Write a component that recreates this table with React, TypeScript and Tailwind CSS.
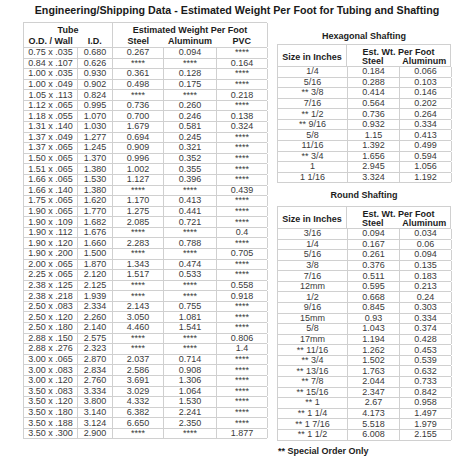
type Row = string[];

const tubes: Row[] = [
  ["0.75 x .035", "0.680", "0.267", "0.094", "****"],
  ["0.84 x .107", "0.626", "****", "****", "0.164"],
  ["1.00 x .035", "0.930", "0.361", "0.128", "****"],
  ["1.00 x .049", "0.902", "0.498", "0.175", "****"],
  ["1.05 x .113", "0.824", "****", "****", "0.218"],
  ["1.12 x .065", "0.995", "0.736", "0.260", "****"],
  ["1.18 x .055", "1.070", "0.700", "0.246", "0.138"],
  ["1.31 x .140", "1.030", "1.679", "0.581", "0.324"],
  ["1.37 x .049", "1.277", "0.694", "0.245", "****"],
  ["1.37 x .065", "1.245", "0.909", "0.321", "****"],
  ["1.50 x .065", "1.370", "0.996", "0.352", "****"],
  ["1.51 x .065", "1.380", "1.002", "0.355", "****"],
  ["1.66 x .065", "1.530", "1.127", "0.396", "****"],
  ["1.66 x .140", "1.380", "****", "****", "0.439"],
  ["1.75 x .065", "1.620", "1.170", "0.413", "****"],
  ["1.90 x .065", "1.770", "1.275", "0.441", "****"],
  ["1.90 x .109", "1.682", "2.085", "0.721", "****"],
  ["1.90 x .112", "1.676", "****", "****", "0.4"],
  ["1.90 x .120", "1.660", "2.283", "0.788", "****"],
  ["1.90 x .200", "1.500", "****", "****", "0.705"],
  ["2.00 x .065", "1.870", "1.343", "0.474", "****"],
  ["2.25 x .065", "2.120", "1.517", "0.533", "****"],
  ["2.38 x .125", "2.125", "****", "****", "0.558"],
  ["2.38 x .218", "1.939", "****", "****", "0.918"],
  ["2.50 x .083", "2.334", "2.143", "0.755", "****"],
  ["2.50 x .120", "2.260", "3.050", "1.081", "****"],
  ["2.50 x .180", "2.140", "4.460", "1.541", "****"],
  ["2.88 x .150", "2.575", "****", "****", "0.806"],
  ["2.88 x .276", "2.323", "****", "****", "1.4"],
  ["3.00 x .065", "2.870", "2.037", "0.714", "****"],
  ["3.00 x .083", "2.834", "2.586", "0.908", "****"],
  ["3.00 x .120", "2.760", "3.691", "1.306", "****"],
  ["3.50 x .083", "3.334", "3.029", "1.064", "****"],
  ["3.50 x .120", "3.800", "4.332", "1.530", "****"],
  ["3.50 x .180", "3.140", "6.382", "2.241", "****"],
  ["3.50 x .188", "3.124", "6.650", "2.350", "****"],
  ["3.50 x .300", "2.900", "****", "****", "1.877"],
];

const hex: Row[] = [
  ["1/4", "0.184", "0.066"],
  ["5/16", "0.288", "0.103"],
  ["** 3/8", "0.414", "0.146"],
  ["7/16", "0.564", "0.202"],
  ["** 1/2", "0.736", "0.264"],
  ["** 9/16", "0.932", "0.334"],
  ["5/8", "1.15", "0.413"],
  ["11/16", "1.392", "0.499"],
  ["** 3/4", "1.656", "0.594"],
  ["1", "2.945", "1.056"],
  ["1 1/16", "3.324", "1.192"],
];

const round: Row[] = [
  ["3/16", "0.094", "0.034"],
  ["1/4", "0.167", "0.06"],
  ["5/16", "0.261", "0.094"],
  ["3/8", "0.376", "0.135"],
  ["7/16", "0.511", "0.183"],
  ["12mm", "0.595", "0.213"],
  ["1/2", "0.668", "0.24"],
  ["9/16", "0.845", "0.303"],
  ["15mm", "0.93", "0.334"],
  ["5/8", "1.043", "0.374"],
  ["17mm", "1.194", "0.428"],
  ["** 11/16", "1.262", "0.453"],
  ["** 3/4", "1.502", "0.539"],
  ["** 13/16", "1.763", "0.632"],
  ["** 7/8", "2.044", "0.733"],
  ["** 15/16", "2.347", "0.842"],
  ["** 1", "2.67", "0.958"],
  ["** 1 1/4", "4.173", "1.497"],
  ["** 1 7/16", "5.518", "1.979"],
  ["** 1 1/2", "6.008", "2.155"],
];

const line = "border-[#d0d0d0]";
const cellCls = "flex items-center justify-center border-r border-[#d0d0d0] leading-[9px] whitespace-nowrap";
const bold = "font-bold text-[#1c1c1c] leading-[10px] whitespace-nowrap";

function DataRows({ rows, cols }: { rows: Row[]; cols: string }) {
  return (
    <>
      {rows.map((r, i) => (
        <div key={i} className={`grid ${cols} h-[10.58px] border-b ${line}`}>
          {r.map((v, j) => (
            <div key={j} className={cellCls}>
              {v}
            </div>
          ))}
        </div>
      ))}
    </>
  );
}

function ShaftTable({ rows }: { rows: Row[] }) {
  const cols = "grid-cols-[70px_52px_52px]";
  return (
    <div className={`w-[174px] border-l border-t ${line}`}>
      <div className={`flex h-[22px] border-b ${line}`}>
        <div className={`w-[70px] flex items-center justify-center pt-[3px] border-r ${line} ${bold}`}>
          Size in Inches
        </div>
        <div className={`w-[104px] flex flex-col border-r ${line}`}>
          <div className={`h-[11px] pt-[2px] text-center ${bold}`}>Est. Wt. Per Foot</div>
          <div className="flex h-[10px]">
            <div className={`w-[52px] text-center ${bold}`}>Steel</div>
            <div className={`w-[52px] text-center ${bold}`}>Aluminum</div>
          </div>
        </div>
      </div>
      <DataRows rows={rows} cols={cols} />
    </div>
  );
}

export default function App() {
  return (
    <div className="w-[474px] h-[457px] bg-white font-['Liberation_Sans',Arial,sans-serif] text-[9px] text-[#3a3a3a] overflow-hidden">
      <div className="h-[22px] pt-[4px] text-center text-[10.7px] font-bold leading-[13px] text-[#1a1a1a]">
        Engineering/Shipping Data - Estimated Weight Per Foot for Tubing and Shafting
      </div>

      <div className="flex items-start gap-[10px] pl-[23px]">
        <div className={`w-[244px] border-l border-t ${line}`}>
          <div className={`flex h-[25px] border-b ${line}`}>
            <div className={`w-[89px] flex flex-col border-r ${line}`}>
              <div className={`h-[13px] pt-[2px] text-center ${bold}`}>Tube</div>
              <div className="flex">
                <div className={`w-[54px] text-center ${bold}`}>O.D. / Wall</div>
                <div className={`w-[35px] text-center ${bold}`}>I.D.</div>
              </div>
            </div>
            <div className={`w-[155px] flex flex-col border-r ${line}`}>
              <div className={`h-[13px] pt-[2px] text-center ${bold}`}>Estimated Weight Per Foot</div>
              <div className="flex">
                <div className={`w-[51px] text-center ${bold}`}>Steel</div>
                <div className={`w-[53px] text-center ${bold}`}>Aluminum</div>
                <div className={`w-[51px] text-center ${bold}`}>PVC</div>
              </div>
            </div>
          </div>
          <DataRows rows={tubes} cols="grid-cols-[54px_35px_51px_53px_51px]" />
        </div>

        <div className="flex flex-col w-[174px]">
          <div className={`h-[22px] pt-[8px] text-center ${bold} leading-[12px]`}>Hexagonal Shafting</div>
          <ShaftTable rows={hex} />
          <div className={`h-[22.6px] pt-[6px] text-center ${bold} leading-[12px]`}>Round Shafting</div>
          <ShaftTable rows={round} />
          <div className={`pt-[4px] pl-[1px] ${bold} leading-[12px]`}>** Special Order Only</div>
        </div>
      </div>
    </div>
  );
}
